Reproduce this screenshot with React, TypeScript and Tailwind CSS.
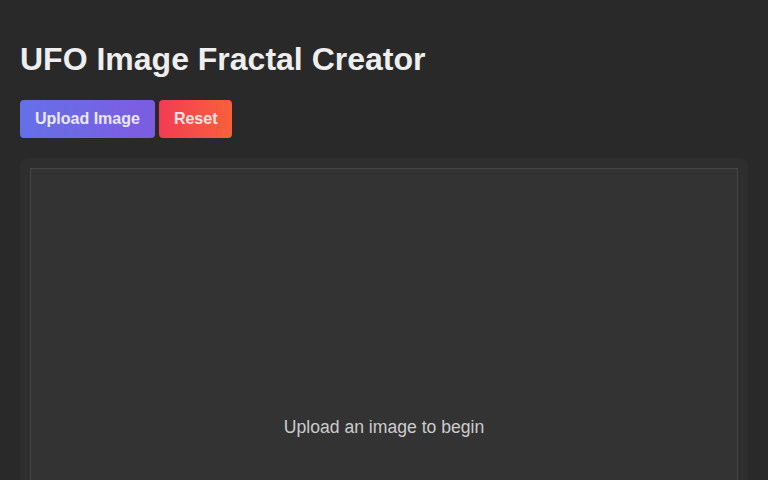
export default function App() {
  return (
    <div className="min-h-screen bg-[#292929] p-5 font-['Liberation_Sans',Arial,sans-serif] text-[#eeeeee]">
      <h1 className="mt-[21px] mb-[22px] text-[32px] font-bold leading-[37px]">UFO Image Fractal Creator</h1>

      <div className="flex gap-1">
        <button className="rounded bg-gradient-to-r from-[#6470e8] to-[#7c5ce0] px-[15px] py-[10px] text-base font-bold leading-[18.4px] text-white/85">
          Upload Image
        </button>
        <button className="rounded bg-gradient-to-r from-[#f23b52] to-[#f8603a] px-[15px] py-[10px] text-base font-bold leading-[18.4px] text-white/85">
          Reset
        </button>
      </div>

      <div className="mt-5 rounded-lg bg-[#2e2e2e] p-[10px]">
        <div className="flex h-[518px] items-center justify-center border border-[#454545] bg-[#333333]">
          <p className="text-[17.6px] text-[#cccccc]">Upload an image to begin</p>
        </div>
      </div>
    </div>
  );
}
